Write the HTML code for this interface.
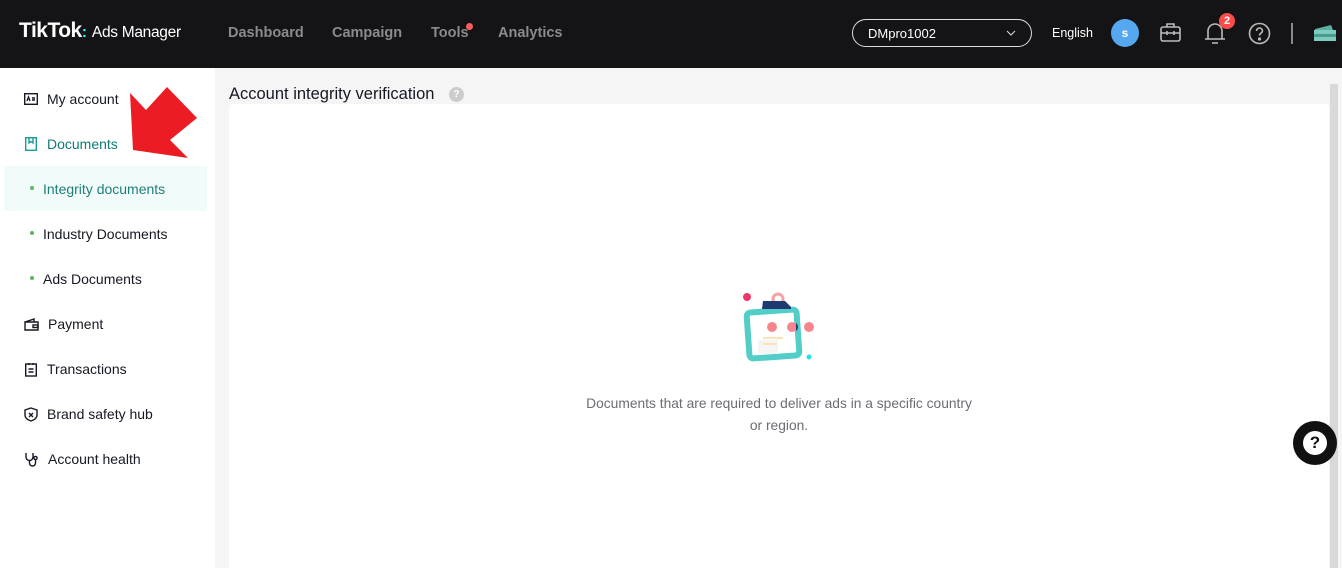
<!DOCTYPE html>
<html><head><meta charset="utf-8"><style>
*{margin:0;padding:0;box-sizing:border-box}
html,body{width:1342px;height:568px;overflow:hidden}
body{background:#f5f5f5;font-family:"Liberation Sans",sans-serif;position:relative}
.hdr{position:absolute;left:0;top:0;width:1342px;height:68px;background:#141416;color:#fff}
.hdr .t{position:absolute;top:25px;font-size:14.5px;font-weight:bold;color:#8a8b8e}
.side{position:absolute;left:0;top:68px;width:215px;height:500px;background:#fff}
.it{position:absolute;left:24px;font-size:14px;color:#161823;display:flex;align-items:center}
.it svg{margin-right:9px}
.sub{position:absolute;left:30px;font-size:14px;color:#161823}
.sub:before{content:"";display:inline-block;width:4px;height:4px;border-radius:50%;background:#5bb85b;margin-right:9px;vertical-align:middle;position:relative;top:-2px}
</style></head><body>
<div class="hdr">
<div style="position:absolute;left:19px;top:19px;font-size:21px;font-weight:bold;letter-spacing:-0.5px">TikTok<span style="color:#25f4ee;font-size:16px">:</span> <span style="font-size:15.5px;font-weight:normal;letter-spacing:-0.3px">Ads Manager</span></div>
<div class="t" style="left:228px">Dashboard</div>
<div class="t" style="left:332px">Campaign</div>
<div class="t" style="left:431px">Tools</div>
<div style="position:absolute;left:466px;top:23px;width:7px;height:7px;border-radius:50%;background:#fe5c5c"></div>
<div class="t" style="left:498px">Analytics</div>
<div style="position:absolute;left:852px;top:19px;width:180px;height:28px;border:1px solid #ddd;border-radius:14px;font-size:13px;padding:6px 0 0 15px">DMpro1002<svg style="position:absolute;right:15px;top:10px" width="10" height="6"><path d="M1 1l4 4 4-4" stroke="#ddd" fill="none"/></svg></div>
<div style="position:absolute;left:1052px;top:26px;font-size:12.5px">English</div>
<div style="position:absolute;left:1111px;top:19px;width:28px;height:28px;border-radius:50%;background:#55a8f0;font-size:12px;font-weight:bold;text-align:center;line-height:28px">s</div>
<svg style="position:absolute;left:1160px;top:22px" width="21" height="21" fill="none" stroke="#bbb" stroke-width="1.6"><rect x="1" y="5" width="19" height="14" rx="2"/><path d="M7 5V2h7v3M1 11h19M7 9v4M14 9v4"/></svg>
<svg style="position:absolute;left:1204px;top:21px" width="22" height="24" fill="none" stroke="#bbb" stroke-width="1.6"><path d="M4 18V10a7 7 0 0114 0v8M1 18h20M8 22h6"/></svg>
<div style="position:absolute;left:1219px;top:13px;width:16px;height:16px;border-radius:50%;background:#fe4c4c;font-size:11px;font-weight:bold;text-align:center;line-height:16px">2</div>
<svg style="position:absolute;left:1248px;top:22px" width="23" height="23" fill="none" stroke="#bbb" stroke-width="1.6"><circle cx="11.5" cy="11.5" r="10"/><path d="M8.5 9a3 3 0 116 0c0 2-3 2-3 4.5"/><circle cx="11.5" cy="17" r=".8" fill="#bbb"/></svg>
<div style="position:absolute;left:1291px;top:23px;width:2px;height:21px;background:#888"></div>
<svg style="position:absolute;left:1313px;top:23px" width="24" height="20"><path d="M2 6l16-4 2 5H2z" fill="#5bb0a4"/><rect x="1" y="7" width="22" height="11" fill="#7fcbbf"/><rect x="1" y="11" width="22" height="3" fill="#4a9c90"/></svg>
</div>
<div class="side">
<div class="it" style="top:23px"><svg width="14" height="12" fill="none" stroke="#161823" stroke-width="1.4"><rect x=".7" y=".7" width="12.6" height="10.6"/><path d="M3 8l1.5-4L6 8M8 5h3M8 7h3"/></svg>My account</div>
<div class="it" style="top:68px;color:#0f7b74"><svg width="14" height="14" fill="none" stroke="#1a9c93" stroke-width="1.4"><rect x="1.7" y=".7" width="10.6" height="12.6"/><path d="M5 1v5l2-1.5L9 6V1"/></svg>Documents</div>
<div style="position:absolute;left:4px;top:98px;width:203px;height:45px;background:#f1fbfa"></div>
<div class="sub" style="top:113px;color:#1e7f78">Integrity documents</div>
<div class="sub" style="top:158px">Industry Documents</div>
<div class="sub" style="top:203px">Ads Documents</div>
<div class="it" style="top:248px"><svg width="15" height="13" fill="none" stroke="#161823" stroke-width="1.4"><path d="M1 4h13v8H1zM1 4l9-3v3"/><rect x="9" y="7" width="5" height="2.5"/></svg>Payment</div>
<div class="it" style="top:293px"><svg width="14" height="15" fill="none" stroke="#161823" stroke-width="1.4"><rect x="1.7" y="2" width="10.6" height="12"/><path d="M5 1v2M9 1v2M4.5 7h5M4.5 10h5"/></svg>Transactions</div>
<div class="it" style="top:338px"><svg width="14" height="15" fill="none" stroke="#161823" stroke-width="1.4"><path d="M7 1l6 2v5c0 3-3 5-6 6-3-1-6-3-6-6V3z"/><path d="M5 6l4 4M9 6l-4 4"/></svg>Brand safety hub</div>
<div class="it" style="top:383px"><svg width="15" height="15" fill="none" stroke="#161823" stroke-width="1.4"><path d="M2 1v4a3.5 3.5 0 007 0V1M5.5 9v2a3 3 0 006 0V8"/><circle cx="11.5" cy="6" r="1.6"/></svg>Account health</div>
</div>
<svg style="position:absolute;left:0;top:0" width="220" height="170"><polygon points="130,93 133,150 188,158 170,140 197,118 167,87 146,110" fill="#ec1c24"/></svg>
<div style="position:absolute;left:229px;top:85px;font-size:16.5px;color:#161823">Account integrity verification</div>
<div style="position:absolute;left:449px;top:87px;width:15px;height:15px;border-radius:50%;background:#ccc;color:#fff;font-size:10px;text-align:center;line-height:15px;font-weight:bold">?</div>
<div style="position:absolute;left:229px;top:104px;width:1100px;height:464px;background:#fff;border-radius:4px 4px 0 0"></div>
<div style="position:absolute;left:1330px;top:84px;width:8px;height:484px;background:#d9d9d9"></div>
<svg style="position:absolute;left:738px;top:290px" width="80" height="75">
<circle cx="9" cy="7" r="4" fill="#f0356b"/>
<circle cx="40" cy="9" r="5" fill="none" stroke="#f7a0a5" stroke-width="3"/>
<rect x="10" y="21" width="50" height="46" rx="4" transform="rotate(-4 35 44)" fill="#fff" stroke="#52cdc8" stroke-width="6"/>
<path d="M25 11h22l6 6v2H24z" fill="#1f3a6e"/>
<rect x="20" y="50" width="20" height="14" fill="#f5f5f5"/>
<path d="M25 48h20M25 54h14" stroke="#fbe3b4" stroke-width="2"/>
<circle cx="34" cy="37" r="5" fill="#f7858d"/><circle cx="54" cy="37" r="5" fill="#f7858d"/><circle cx="71" cy="37" r="5" fill="#f7858d"/>
<path d="M58 33a5 5 0 010 8" fill="#1f3a6e"/>
<circle cx="71" cy="67" r="2.5" fill="#25e0f0"/>
</svg>
<div style="position:absolute;left:574px;top:393px;width:410px;text-align:center;font-size:13.8px;line-height:22px;color:#6b6d73">Documents that are required to deliver ads in a specific country<br>or region.</div>
<div style="position:absolute;left:1293px;top:421px;width:44px;height:44px;border-radius:50%;background:#111;"><div style="position:absolute;left:10px;top:10px;width:24px;height:24px;border-radius:50%;background:#fff;color:#111;font-weight:bold;font-size:17px;text-align:center;line-height:24px">?</div></div>
</body></html>
